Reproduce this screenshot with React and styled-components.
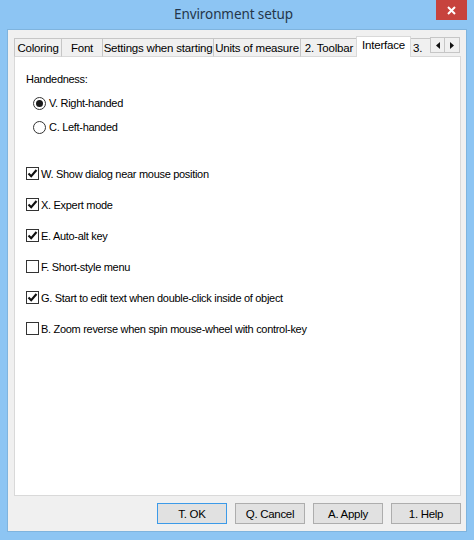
import React from "react";
import styled, { createGlobalStyle } from "styled-components";

const Global = createGlobalStyle`
  html, body { margin: 0; padding: 0; background: #8dc5f3; }
  * { box-sizing: border-box; }
`;

const Frame = styled.div`
  width: 474px;
  height: 540px;
  background: #8dc5f3;
  display: flex;
  flex-direction: column;
  font-family: "Liberation Sans", Arial, sans-serif;
  font-size: 11px;
  color: #000;
  overflow: hidden;
`;

const TitleBar = styled.div`
  height: 29px;
  display: grid;
  grid-template-columns: 1fr auto 1fr;
  align-items: start;
  padding-right: 7px;
`;

const Title = styled.div`
  grid-column: 2;
  padding-top: 5px;
  font-family: "Noto Sans", "Open Sans", sans-serif;
  font-size: 13.5px;
  letter-spacing: -0.1px;
  color: #24364a;
`;

const Close = styled.div`
  grid-column: 3;
  justify-self: end;
  width: 31px;
  height: 20px;
  background: #c7433d;
  display: flex;
  align-items: center;
  justify-content: center;
`;

const Client = styled.div`
  margin: 0 7px 8px 7px;
  flex: 1;
  background: #f0f0f0;
  border: 1px solid #7fb4de;
  display: flex;
  flex-direction: column;
  padding: 6px 6px 0 6px;
`;

const TabStrip = styled.div`
  height: 21px;
  display: flex;
  align-items: flex-end;
  position: relative;
  z-index: 1;
`;

const TabClip = styled.div`
  width: 416px;
  height: 21px;
  display: flex;
  align-items: flex-end;
  overflow: hidden;
`;

const Tab = styled.div`
  flex: none;
  width: ${(p) => p.$w}px;
  height: ${(p) => (p.$active ? 21 : 19)}px;
  margin: ${(p) => (p.$active ? "0 -2px 0 -2px" : "0")};
  padding-top: ${(p) => (p.$active ? 2 : 3)}px;
  background: ${(p) => (p.$active ? "#ffffff" : "#f0f0f0")};
  border: 1px solid ${(p) => (p.$active ? "#d9d9d9" : "#c6c6c6")};
  border-bottom: ${(p) => (p.$active ? "none" : "1px solid #d9d9d9")};
  ${(p) => (p.$first ? "" : "border-left: none;")}
  ${(p) => (p.$active ? "border-left: 1px solid #d9d9d9; position: relative; z-index: 2;" : "")}
  text-align: ${(p) => (p.$left ? "left" : "center")};
  padding-left: ${(p) => (p.$left ? 4 : 0)}px;
  white-space: nowrap;
  font-size: 11.5px;
  letter-spacing: -0.2px;
  color: #000;
`;

const Arrows = styled.div`
  display: flex;
  align-self: flex-start;
  margin-top: 1px;
`;

const ArrowBtn = styled.div`
  width: 15px;
  height: 16px;
  background: #f0f0f0;
  border: 1px solid #c6c6c6;
  ${(p) => (p.$second ? "border-left: none;" : "")}
  display: flex;
  align-items: center;
  justify-content: center;
`;

const Panel = styled.div`
  width: 447px;
  height: 440px;
  margin-top: -1px;
  background: #ffffff;
  border: 1px solid #d9d9d9;
  padding: 14px 0 0 11px;
  display: flex;
  flex-direction: column;
  font-size: 11px;
  letter-spacing: -0.3px;
`;

const Label = styled.div`
  height: 16px;
  line-height: 16px;
`;

const RadioGroup = styled.div`
  display: flex;
  flex-direction: column;
  padding: 4px 0 0 7px;
  margin-bottom: 19px;
`;

const Row = styled.div`
  height: ${(p) => p.$h}px;
  display: flex;
  align-items: center;
  gap: ${(p) => p.$gap}px;
`;

const RadioCircle = styled.div`
  width: 13px;
  height: 13px;
  border-radius: 50%;
  border: 1px solid #333;
  background: #fff;
  display: flex;
  align-items: center;
  justify-content: center;
  &::after {
    content: "";
    display: ${(p) => (p.$on ? "block" : "none")};
    width: 7px;
    height: 7px;
    border-radius: 50%;
    background: #1a1a1a;
  }
`;

const Box = styled.div`
  width: 13px;
  height: 13px;
  border: 1px solid #333;
  background: #fff;
  display: flex;
  align-items: center;
  justify-content: center;
`;

const ButtonBar = styled.div`
  display: flex;
  justify-content: flex-end;
  gap: 8px;
  padding: 7px 0 0 0;
  margin-right: -1px;
`;

const Button = styled.div`
  width: 70px;
  height: 21px;
  background: #e1e1e1;
  border: 1px solid ${(p) => (p.$default ? "#3c9ae8" : "#adadad")};
  display: flex;
  align-items: center;
  justify-content: center;
  font-size: 11.5px;
  letter-spacing: -0.3px;
`;

const Check = () => (
  <svg width="11" height="11" viewBox="0 0 11 11">
    <path d="M1.5 5.5 L4.2 8.3 L9.5 2" fill="none" stroke="#111" strokeWidth="2.1" />
  </svg>
);

const CheckBox = ({ on, label }) => (
  <Row $h={31} $gap={2}>
    <Box>{on && <Check />}</Box>
    <span>{label}</span>
  </Row>
);

const tabs = [
  { t: "Coloring", w: 48, first: true },
  { t: "Font", w: 41 },
  { t: "Settings when starting", w: 111 },
  { t: "Units of measure", w: 87 },
  { t: "2. Toolbar", w: 57 },
  { t: "Interface", w: 55, active: true },
  { t: "3.", w: 60, left: true },
];

export default function App() {
  return (
    <Frame>
      <Global />
      <TitleBar>
        <Title>Environment setup</Title>
        <Close>
          <svg width="9" height="9" viewBox="0 0 9 9">
            <path d="M1 1 L8 8 M8 1 L1 8" stroke="#fff" strokeWidth="2" />
          </svg>
        </Close>
      </TitleBar>
      <Client>
        <TabStrip>
          <TabClip>
            {tabs.map((x) => (
              <Tab key={x.t} $w={x.w} $first={x.first} $active={x.active} $left={x.left}>
                {x.t}
              </Tab>
            ))}
          </TabClip>
          <Arrows>
            <ArrowBtn>
              <svg width="4" height="7" viewBox="0 0 4 7">
                <path d="M4 0 L0 3.5 L4 7 Z" fill="#111" />
              </svg>
            </ArrowBtn>
            <ArrowBtn $second>
              <svg width="4" height="7" viewBox="0 0 4 7">
                <path d="M0 0 L4 3.5 L0 7 Z" fill="#111" />
              </svg>
            </ArrowBtn>
          </Arrows>
        </TabStrip>
        <Panel>
          <Label>Handedness:</Label>
          <RadioGroup>
            <Row $h={24} $gap={3}>
              <RadioCircle $on />
              <span>V. Right-handed</span>
            </Row>
            <Row $h={24} $gap={3}>
              <RadioCircle />
              <span>C. Left-handed</span>
            </Row>
          </RadioGroup>
          <CheckBox on label="W. Show dialog near mouse position" />
          <CheckBox on label="X. Expert mode" />
          <CheckBox on label="E. Auto-alt key" />
          <CheckBox label="F. Short-style menu" />
          <CheckBox on label="G. Start to edit text when double-click inside of object" />
          <CheckBox label="B. Zoom reverse when spin mouse-wheel with control-key" />
        </Panel>
        <ButtonBar>
          <Button $default>T. OK</Button>
          <Button>Q. Cancel</Button>
          <Button>A. Apply</Button>
          <Button>1. Help</Button>
        </ButtonBar>
      </Client>
    </Frame>
  );
}
